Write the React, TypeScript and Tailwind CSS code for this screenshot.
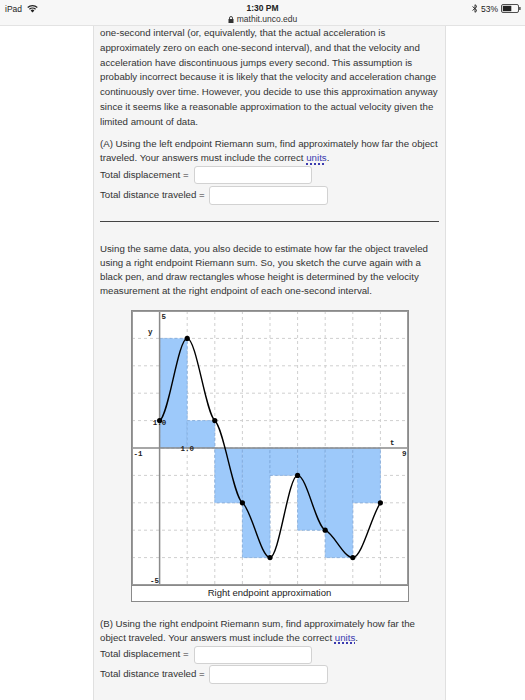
import React from "react"

// velocity measurements (t, v), one per second
const data: [number, number][] = [
  [0, 1], [1, 4], [2, 1], [3, -2], [4, -4], [5, -1], [6, -3], [7, -4], [8, -2],
]

const W = 276
const H = 274
const sx = (t: number) => (t + 1) * (W / 10)
const sy = (v: number) => (5 - v) * (H / 10)

function curvePath() {
  const n = data.length
  const m = data.map(([, y], i) => {
    if (i === 0) return 0.5
    if (i === n - 1) return 1.5
    const a = y - data[i - 1][1]
    const b = data[i + 1][1] - y
    if (a * b <= 0) return 0
    return 0.3 * (data[i + 1][1] - data[i - 1][1]) / 2
  })
  let d = `M${sx(data[0][0])},${sy(data[0][1])}`
  for (let i = 0; i < n - 1; i++) {
    const [x0, y0] = data[i]
    const [x1, y1] = data[i + 1]
    d += ` C${sx(x0 + 1 / 3)},${sy(y0 + m[i] / 3)} ${sx(x1 - 1 / 3)},${sy(y1 - m[i + 1] / 3)} ${sx(x1)},${sy(y1)}`
  }
  return d
}

function RiemannGraph() {
  const rects = data.slice(1).map(([t, v]) => ({
    x: sx(t - 1),
    y: sy(Math.max(0, v)),
    h: Math.abs(sy(v) - sy(0)),
  }))
  const label = { fontFamily: "'Liberation Mono', monospace", fontSize: 7.5, fontWeight: 700, fill: "#222" }
  return (
    <svg width={W} height={H} className="block">
      <rect x={0} y={0} width={W} height={H} fill="#ffffff" />
      {/* grid */}
      {[1, 2, 3, 4, 5, 6, 7, 8].map((t) => (
        <line key={"v" + t} x1={sx(t)} y1={0} x2={sx(t)} y2={H} stroke="#cfcfcf" strokeWidth={1} strokeDasharray="3 3" />
      ))}
      {[-4, -3, -2, -1, 1, 2, 3, 4].map((v) => (
        <line key={"h" + v} x1={0} y1={sy(v)} x2={W} y2={sy(v)} stroke="#cfcfcf" strokeWidth={1} strokeDasharray="3 3" />
      ))}
      {/* right endpoint rectangles */}
      {rects.map((r, i) => (
        <rect key={i} x={r.x} y={r.y} width={W / 10} height={r.h} fill="#9dc9fa" stroke="#7fa9dc" strokeWidth={0.8} strokeDasharray="3 2" />
      ))}
      {/* axes */}
      <line x1={sx(0)} y1={0} x2={sx(0)} y2={H} stroke="#8a8a8a" strokeWidth={1.5} />
      <line x1={0} y1={sy(0)} x2={W} y2={sy(0)} stroke="#8a8a8a" strokeWidth={1.5} />
      <path d={curvePath()} fill="none" stroke="#000" strokeWidth={1.4} />
      {data.map(([t, v]) => (
        <circle key={t} cx={sx(t)} cy={sy(v)} r={2.6} fill="#000" />
      ))}
      <text x={29.5} y={8} style={label}>5</text>
      <text x={16} y={23} style={label}>y</text>
      <text x={sx(0)} y={114} textAnchor="middle" style={label}>1.0</text>
      <text x={sx(1)} y={140} textAnchor="middle" style={label}>1.0</text>
      <text x={1.5} y={145} style={label}>-1</text>
      <text x={270} y={145} style={label}>9</text>
      <text x={258} y={134} style={label}>t</text>
      <text x={18} y={272} style={label}>-5</text>
      <rect x={0.5} y={0.5} width={W - 1} height={H - 1} fill="none" stroke="#9a9a9a" strokeWidth={1} />
    </svg>
  )
}

function AnswerRows() {
  return (
    <div>
      <div className="flex items-center h-[19px]">
        <span className="w-[94px] shrink-0 whitespace-nowrap">Total displacement =</span>
        <div className="w-[118px] h-[18px] bg-white border border-[#d2d2d2] rounded-[3px]" />
      </div>
      <div className="flex items-center h-[19px] mt-[1px]">
        <span className="w-[109px] shrink-0 whitespace-nowrap">Total distance traveled =</span>
        <div className="w-[119px] h-[19px] bg-white border border-[#d2d2d2] rounded-[3px]" />
      </div>
    </div>
  )
}

function Units() {
  return (
    <span className="text-[#3b3bb0] underline decoration-dotted decoration-[1.5px] underline-offset-[2px] decoration-[#3b3bb0]">units</span>
  )
}

function StatusBar() {
  return (
    <div className="h-[26px] bg-[#f7f7f7] border-b border-[#e3e3e3] grid grid-cols-[1fr_auto_1fr] text-[8.5px] text-[#222] font-['Liberation_Sans',sans-serif]">
      <div className="flex items-start pt-[3px] pl-[5px] gap-[5px]">
        <span>iPad</span>
        <svg width="11" height="9" viewBox="0 0 11 9" className="mt-[1px]">
          <path d="M5.5 8.5 L3.6 6.5 A2.7 2.7 0 0 1 7.4 6.5 Z" fill="#222" />
          <path d="M2.4 5.3 A4.4 4.4 0 0 1 8.6 5.3" fill="none" stroke="#222" strokeWidth="1.2" />
          <path d="M0.7 3.5 A6.9 6.9 0 0 1 10.3 3.5" fill="none" stroke="#222" strokeWidth="1.2" />
        </svg>
      </div>
      <div className="flex flex-col items-center pt-[3px] leading-[11px]">
        <span className="font-bold">1:30 PM</span>
        <span className="flex items-center gap-[3px] text-[#333]">
          <svg width="6" height="7" viewBox="0 0 6 7">
            <path d="M1.5 3 V2 A1.5 1.5 0 0 1 4.5 2 V3" fill="none" stroke="#333" strokeWidth="0.9" />
            <rect x="0.5" y="3" width="5" height="4" fill="#333" />
          </svg>
          mathit.unco.edu
        </span>
      </div>
      <div className="flex items-start justify-end pt-[3px] pr-[4px] gap-[3px]">
        <svg width="6" height="9" viewBox="0 0 6 9" className="mt-[1px]">
          <path d="M0.5 2.5 L5 6.5 L3 8.3 V0.7 L5 2.5 L0.5 6.5" fill="none" stroke="#222" strokeWidth="0.9" />
        </svg>
        <span>53%</span>
        <svg width="20" height="9" viewBox="0 0 20 9" className="mt-[1px]">
          <rect x="0.5" y="0.5" width="17" height="8" rx="1.5" fill="none" stroke="#222" strokeWidth="0.8" />
          <rect x="1.8" y="1.8" width="8.5" height="5.4" fill="#222" />
          <rect x="18.3" y="3" width="1.2" height="3" fill="#222" />
        </svg>
      </div>
    </div>
  )
}

export default function App() {
  return (
    <div className="w-[525px] h-[700px] overflow-hidden bg-white font-['Liberation_Sans',Arial,sans-serif]">
      <StatusBar />
      <div className="ml-[93px] w-[353px] h-[700px] bg-[#f5f5f5] border-x border-[#e0e0e0] px-[6px] text-[9.7px] text-[#333]">
        <p className="leading-[14.8px]">
          one-second interval (or, equivalently, that the actual acceleration is approximately zero on each one-second interval), and that the velocity and acceleration have discontinuous jumps every second. This assumption is probably incorrect because it is likely that the velocity and acceleration change continuously over time. However, you decide to use this approximation anyway since it seems like a reasonable approximation to the actual velocity given the limited amount of data.
        </p>

        {/* part A */}
        <p className="mt-[7px] leading-[14.5px]">
          (A) Using the left endpoint Riemann sum, find approximately how far the object traveled. Your answers must include the correct <Units />.
        </p>
        <AnswerRows />

        <div className="mt-[16px] h-px bg-[#444]" />

        <p className="mt-[20px] leading-[14.3px]">
          Using the same data, you also decide to estimate how far the object traveled using a right endpoint Riemann sum. So, you sketch the curve again with a black pen, and draw rectangles whose height is determined by the velocity measurement at the right endpoint of each one-second interval.
        </p>

        <div className="mt-[11px] flex justify-center">
          <div className="w-[278px] border border-[#8a8a8a] bg-white">
            <RiemannGraph />
            <div className="h-[16px] border-t border-[#8a8a8a] flex items-center justify-center text-[9.5px] text-[#222]">
              Right endpoint approximation
            </div>
          </div>
        </div>

        {/* part B */}
        <p className="mt-[15px] leading-[14.2px]">
          (B) Using the right endpoint Riemann sum, find approximately how far the object traveled. Your answers must include the correct <Units />.
        </p>
        <AnswerRows />
      </div>
    </div>
  )
}
